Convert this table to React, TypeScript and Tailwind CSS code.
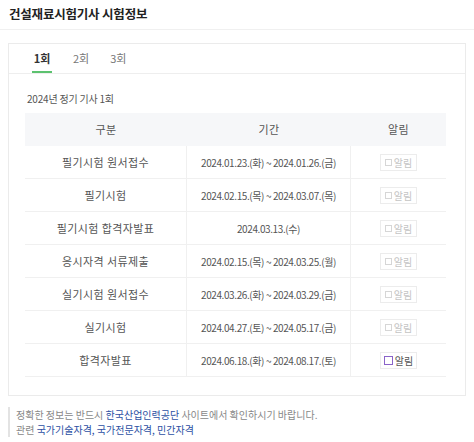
import React from "react";

const rows: { name: string; period: string; active?: boolean }[] = [
  { name: "필기시험 원서접수", period: "2024.01.23.(화) ~ 2024.01.26.(금)" },
  { name: "필기시험", period: "2024.02.15.(목) ~ 2024.03.07.(목)" },
  { name: "필기시험 합격자발표", period: "2024.03.13.(수)" },
  { name: "응시자격 서류제출", period: "2024.02.15.(목) ~ 2024.03.25.(월)" },
  { name: "실기시험 원서접수", period: "2024.03.26.(화) ~ 2024.03.29.(금)" },
  { name: "실기시험", period: "2024.04.27.(토) ~ 2024.05.17.(금)" },
  { name: "합격자발표", period: "2024.06.18.(화) ~ 2024.08.17.(토)", active: true },
];

function AlarmButton({ active }: { active?: boolean }) {
  return (
    <div className="flex h-[17px] w-[37px] items-center justify-center gap-[2px] border border-[#ececec] bg-white">
      <span
        className={
          active
            ? "block h-[9px] w-[9px] border border-[#8a63c9]"
            : "block h-[7px] w-[7px] border border-[#d6d6d6]"
        }
      />
      <span className={active ? "text-[10px] text-[#555]" : "text-[10px] text-[#c4c4c4]"}>알림</span>
    </div>
  );
}

export default function App() {
  return (
    <div className="h-[442px] w-[474px] bg-white font-['Noto_Sans_CJK_KR','Noto_Sans',sans-serif] text-[#555]">
      <div className="flex h-[30px] items-center border-b border-[#f0f0f0] pl-[9px]">
        <h1 className="text-[12.5px] font-bold tracking-[-0.2px] text-[#222]">건설재료시험기사 시험정보</h1>
      </div>
      <div className="mx-[8px] mt-[13px] h-[353px] border border-[#ebebeb]">
        <div className="flex h-[30px] items-end gap-[21px] border-b border-[#eeeeee] pl-[23px]">
          <div className="flex h-full flex-col items-center justify-end">
            <span className="pb-[5px] text-[11px] font-bold text-[#333]">1회</span>
            <span className="block h-[2px] w-[20px] bg-[#5cc26f]" />
          </div>
          <span className="pb-[7px] text-[11px] text-[#777]">2회</span>
          <span className="pb-[7px] text-[11px] text-[#777]">3회</span>
        </div>
        <div className="px-[16px]">
          <div className="pt-[17px] pb-[7px] pl-[2px] text-[10px] tracking-[-0.2px] text-[#555]">2024년 정기 기사 1회</div>
          <div className="w-[421px] text-[11px] tracking-[0.4px]">
            <div className="grid h-[33px] grid-cols-[162px_164px_95px] items-center bg-[#f6f7f9] text-center text-[#555]">
              <span>구분</span>
              <span>기간</span>
              <span>알림</span>
            </div>
            {rows.map((r) => (
              <div
                key={r.name}
                className="grid h-[33px] grid-cols-[162px_164px_95px] border-b border-[#f0f0f0] text-center"
              >
                <div className="flex items-center justify-center border-r border-[#f0f0f0]">{r.name}</div>
                <div className="flex items-center justify-center border-r border-[#f0f0f0] text-[10px] tracking-[-0.4px]">
                  {r.period}
                </div>
                <div className="flex items-center justify-center tracking-normal">
                  <AlarmButton active={r.active} />
                </div>
              </div>
            ))}
          </div>
        </div>
      </div>
      <div className="ml-[8px] mt-[11px] border-l-2 border-[#e3e3e3] pl-[6px] text-[10px] leading-[15px] text-[#888]">
        <p>
          정확한 정보는 반드시 <span className="text-[#2c4fa3]">한국산업인력공단</span> 사이트에서 확인하시기 바랍니다.
        </p>
        <p>
          관련 <span className="text-[#2c4fa3]">국가기술자격, 국가전문자격, 민간자격</span>
        </p>
      </div>
    </div>
  );
}
